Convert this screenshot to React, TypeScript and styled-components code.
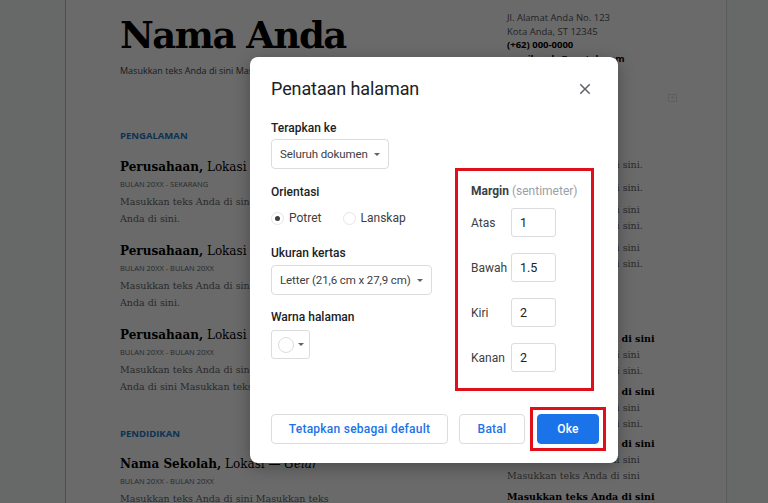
import styled, { createGlobalStyle } from 'styled-components';

const GlobalStyle = createGlobalStyle`
  html, body {
    margin: 0;
    padding: 0;
    height: 503px;
    overflow: hidden;
    background: #f8f9fa;
  }
  * { box-sizing: border-box; }
`;

const Workspace = styled.div`
  position: relative;
  height: 503px;
  overflow: hidden;
  background: #f8f9fa;
  padding-left: 66px;
`;

const Page = styled.div`
  position: relative;
  width: 660px;
  height: 503px;
  background: #fff;
  box-shadow: -1px 0 0 #b9bcbf, 1px 0 0 #dadce0;
  padding-left: 54px;
  display: grid;
  grid-template-columns: 387px 140px;
  align-items: start;
  font-family: "DejaVu Serif", "Liberation Serif", serif;
`;

const Column = styled.div`
  display: flex;
  flex-direction: column;
`;

const Name = styled.h1`
  margin: 14px 0 0;
  font-family: "DejaVu Serif", serif;
  font-weight: 700;
  font-size: 37px;
  letter-spacing: -1.5px;
  line-height: 43px;
  color: #000;
`;

const Subtitle = styled.div`
  margin-top: 8px;
  font-family: "Open Sans", sans-serif;
  font-size: 9px;
  line-height: 12px;
  color: #444;
  white-space: nowrap;
`;

const SectionHead = styled.div<{ $mt: number }>`
  margin-top: ${p => p.$mt}px;
  font-family: "Open Sans", sans-serif;
  font-weight: 700;
  font-size: 9.5px;
  line-height: 14px;
  color: #2079c7;
`;

const Entry = styled.div<{ $mt: number }>`
  margin-top: ${p => p.$mt}px;
`;

const EntryTitle = styled.div`
  font-size: 12px;
  line-height: 18px;
  color: #000;
  white-space: nowrap;
  b { font-weight: 700; }
  i { font-style: italic; }
`;

const EntryDate = styled.div`
  margin-top: 2px;
  font-family: "Open Sans", sans-serif;
  font-size: 7.5px;
  line-height: 12px;
  color: #666;
`;

const EntryText = styled.div`
  margin-top: 2.5px;
  font-size: 9.5px;
  line-height: 17px;
  color: #666;
  white-space: nowrap;
`;

const Address = styled.div`
  margin-top: 11px;
  font-family: "Open Sans", sans-serif;
  font-size: 9.5px;
  line-height: 13.5px;
  color: #555;
  white-space: nowrap;
  b { color: #000; font-weight: 700; }
`;

const SideText = styled.div<{ $mt: number; $bold?: boolean }>`
  margin-top: ${p => p.$mt}px;
  font-size: 9.5px;
  line-height: 16px;
  color: ${p => (p.$bold ? '#000' : '#666')};
  font-weight: ${p => (p.$bold ? 700 : 400)};
  white-space: nowrap;
`;

const AddMark = styled.div`
  position: absolute;
  left: 602px;
  top: 94px;
  width: 9px;
  height: 8px;
  border: 1px solid #e4e4e4;
  color: #d0d0d0;
  font-size: 7px;
  line-height: 6px;
  text-align: center;
  font-family: "Open Sans", sans-serif;
`;

const Scrim = styled.div`
  position: absolute;
  inset: 0;
  background: rgba(0, 0, 0, 0.585);
`;

const Dialog = styled.div`
  position: absolute;
  left: 250px;
  top: 57px;
  width: 368px;
  height: 406px;
  background: #fff;
  border-radius: 8px;
  box-shadow: 0 4px 16px rgba(0, 0, 0, 0.3);
  padding: 20px 0 0 21px;
  display: flex;
  flex-direction: column;
  font-family: Roboto, "Noto Sans", sans-serif;
  color: #202124;
`;

const Header = styled.div`
  display: flex;
  align-items: center;
  justify-content: space-between;
  padding-right: 24px;
  height: 24px;
`;

const Title = styled.div`
  font-size: 18px;
  line-height: 24px;
  letter-spacing: -0.1px;
  color: #202124;
`;

const CloseBtn = styled.button`
  border: none;
  background: none;
  padding: 0;
  width: 18px;
  height: 18px;
  display: flex;
  color: #5f6368;
  cursor: pointer;
`;

const Body = styled.div`
  display: grid;
  grid-template-columns: 184px 139px;
  margin-top: 19px;
  padding-right: 24px;
  align-items: start;
`;

const Field = styled.div<{ $mt: number }>`
  margin-top: ${p => p.$mt}px;
  display: flex;
  flex-direction: column;
  align-items: flex-start;
`;

const Label = styled.div<{ $gap: number }>`
  font-size: 12px;
  font-weight: 500;
  line-height: 16px;
  color: #202124;
  margin-bottom: ${p => p.$gap}px;
`;

const Select = styled.div`
  height: 30px;
  display: flex;
  align-items: center;
  gap: 6px;
  padding: 0 8px;
  border: 1px solid #dadce0;
  border-radius: 4px;
  font-size: 11.5px;
  letter-spacing: -0.1px;
  color: #3c4043;
  white-space: nowrap;
`;

const Caret = styled.span`
  width: 0;
  height: 0;
  border-left: 3px solid transparent;
  border-right: 3px solid transparent;
  border-top: 3px solid #5f6368;
`;

const RadioRow = styled.div`
  height: 20px;
  display: flex;
  align-items: center;
  font-size: 12px;
  color: #3c4043;
`;

const RadioOption = styled.label<{ $mr?: number }>`
  display: flex;
  align-items: center;
  gap: 5px;
  margin-right: ${p => p.$mr ?? 0}px;
`;

const RadioDot = styled.span<{ $checked: boolean }>`
  width: 13px;
  height: 13px;
  border-radius: 50%;
  border: 1px solid #e3e5e8;
  display: flex;
  align-items: center;
  justify-content: center;
  &::after {
    content: '';
    width: 5px;
    height: 5px;
    border-radius: 50%;
    background: ${p => (p.$checked ? '#3c4043' : 'transparent')};
  }
`;

const ColorBtn = styled.div`
  width: 39px;
  height: 29px;
  border: 1px solid #dadce0;
  border-radius: 3px;
  display: flex;
  align-items: center;
  gap: 4px;
  padding-left: 6px;
`;

const Swatch = styled.span`
  width: 16px;
  height: 16px;
  border-radius: 50%;
  border: 1px solid #dadce0;
  background: #fff;
`;

const MarginBox = styled.div`
  margin-top: 48px;
  border: 3px solid #e0101a;
  padding: 12px 0 16px 13px;
  display: flex;
  flex-direction: column;
  gap: 16px;
`;

const MarginTitle = styled.div`
  font-size: 12px;
  font-weight: 700;
  line-height: 16px;
  color: #3c4043;
  margin-bottom: -7px;
  span { font-weight: 400; color: #9aa0a6; }
`;

const MarginRow = styled.div`
  display: flex;
  align-items: center;
`;

const MarginLabel = styled.div`
  width: 40px;
  font-size: 12px;
  color: #3c4043;
`;

const MarginInput = styled.div`
  width: 45px;
  height: 29px;
  border: 1px solid #dadce0;
  border-radius: 3px;
  display: flex;
  align-items: center;
  padding-left: 8px;
  font-size: 12.5px;
  color: #202124;
`;

const Footer = styled.div`
  margin-top: auto;
  display: flex;
  align-items: center;
  padding: 0 12px 12px 0;
`;

const Button = styled.button<{ $w: number }>`
  width: ${p => p.$w}px;
  height: 30px;
  border: 1px solid #dadce0;
  border-radius: 4px;
  background: #fff;
  color: #1a73e8;
  font-family: Roboto, sans-serif;
  font-weight: 500;
  font-size: 12px;
  letter-spacing: 0.25px;
  cursor: pointer;
`;

const Spacer = styled.div`
  flex: 1;
`;

const Highlight = styled.div`
  margin-left: 5px;
  border: 3px solid #e0101a;
  padding: 4px;
  display: flex;
`;

const PrimaryButton = styled(Button)`
  background: #1a73e8;
  border-color: #1a73e8;
  color: #fff;
`;

const lines = 'Masukkan teks Anda di sini Masukkan teks Anda di sini Masukkan';

function App() {
  const entries = [
    { mt: 15, date: 'BULAN 20XX - SEKARANG', last: 'Anda di sini.' },
    { mt: 15.5, date: 'BULAN 20XX - BULAN 20XX', last: 'Anda di sini.' },
    { mt: 15.5, date: 'BULAN 20XX - BULAN 20XX', last: 'Anda di sini Masukkan teks Anda di sini.' },
  ];

  return (
    <>
      <GlobalStyle />
      <Workspace>
        <Page>
          <Column>
            <Name>Nama Anda</Name>
            <Subtitle>Masukkan teks Anda di sini Masukkan teks Anda di sini</Subtitle>
            <SectionHead $mt={52}>PENGALAMAN</SectionHead>
            {entries.map((e, i) => (
              <Entry key={i} $mt={e.mt}>
                <EntryTitle>
                  <b>Perusahaan,</b> Lokasi — <i>Jabatan</i>
                </EntryTitle>
                <EntryDate>{e.date}</EntryDate>
                <EntryText>
                  {lines}
                  <br />
                  {e.last}
                </EntryText>
              </Entry>
            ))}
            <SectionHead $mt={32.5}>PENDIDIKAN</SectionHead>
            <Entry $mt={14}>
              <EntryTitle>
                <b>Nama Sekolah,</b> Lokasi — <i>Gelar</i>
              </EntryTitle>
              <EntryDate>BULAN 20XX - BULAN 20XX</EntryDate>
              <EntryText>Masukkan teks Anda di sini Masukkan teks</EntryText>
            </Entry>
          </Column>
          <Column>
            <Address>
              Jl. Alamat Anda No. 123
              <br />
              Kota Anda, ST 12345
              <br />
              <b>(+62) 000-0000</b>
              <br />
              <b>email.anda@contoh.com</b>
            </Address>
            <SectionHead $mt={65}>KETERAMPILAN</SectionHead>
            <SideText $mt={13}>Masukkan teks Anda di sini.</SideText>
            <SideText $mt={7}>Masukkan teks Anda di sini.</SideText>
            <SideText $mt={6}>
              Masukkan teks Anda di sini
              <br />
              Masukkan teks Anda di sini.
            </SideText>
            <SideText $mt={6}>
              Masukkan teks Anda di sini
              <br />
              Masukkan teks Anda di sini.
            </SideText>
            <SectionHead $mt={31}>PENGHARGAAN</SectionHead>
            <SideText $mt={14} $bold>Masukkan teks Anda di sini</SideText>
            <SideText $mt={0}>
              Masukkan teks Anda di sini
              <br />
              Masukkan teks Anda di sini.
            </SideText>
            <SideText $mt={5} $bold>Masukkan teks Anda di sini</SideText>
            <SideText $mt={0}>
              Masukkan teks Anda di sini
              <br />
              Masukkan teks Anda di sini.
            </SideText>
            <SideText $mt={4} $bold>Masukkan teks Anda di sini</SideText>
            <SideText $mt={0}>
              Masukkan teks Anda di sini
              <br />
              Masukkan teks Anda di sini
            </SideText>
            <SideText $mt={5} $bold>Masukkan teks Anda di sini</SideText>
          </Column>
          <AddMark>+</AddMark>
        </Page>
        <Scrim />
        <Dialog>
          <Header>
            <Title>Penataan halaman</Title>
            <CloseBtn aria-label="Tutup">
              <svg width="18" height="18" viewBox="0 0 24 24" fill="currentColor">
                <path d="M19 6.41L17.59 5 12 10.59 6.41 5 5 6.41 10.59 12 5 17.59 6.41 19 12 13.41 17.59 19 19 17.59 13.41 12z" />
              </svg>
            </CloseBtn>
          </Header>
          <Body>
            <div>
              <Field $mt={0}>
                <Label $gap={3}>Terapkan ke</Label>
                <Select>
                  Seluruh dokumen <Caret />
                </Select>
              </Field>
              <Field $mt={15}>
                <Label $gap={8}>Orientasi</Label>
                <RadioRow>
                  <RadioOption $mr={21}>
                    <RadioDot $checked />
                    Potret
                  </RadioOption>
                  <RadioOption>
                    <RadioDot $checked={false} />
                    Lanskap
                  </RadioOption>
                </RadioRow>
              </Field>
              <Field $mt={17}>
                <Label $gap={4}>Ukuran kertas</Label>
                <Select>
                  Letter (21,6 cm x 27,9 cm) <Caret />
                </Select>
              </Field>
              <Field $mt={14}>
                <Label $gap={5}>Warna halaman</Label>
                <ColorBtn>
                  <Swatch />
                  <Caret />
                </ColorBtn>
              </Field>
            </div>
            <MarginBox>
              <MarginTitle>
                Margin <span>(sentimeter)</span>
              </MarginTitle>
              {[
                ['Atas', '1'],
                ['Bawah', '1.5'],
                ['Kiri', '2'],
                ['Kanan', '2'],
              ].map(([label, value]) => (
                <MarginRow key={label}>
                  <MarginLabel>{label}</MarginLabel>
                  <MarginInput>{value}</MarginInput>
                </MarginRow>
              ))}
            </MarginBox>
          </Body>
          <Footer>
            <Button $w={177}>Tetapkan sebagai default</Button>
            <Spacer />
            <Button $w={66}>Batal</Button>
            <Highlight>
              <PrimaryButton $w={62}>Oke</PrimaryButton>
            </Highlight>
          </Footer>
        </Dialog>
      </Workspace>
    </>
  );
}

export default App;
